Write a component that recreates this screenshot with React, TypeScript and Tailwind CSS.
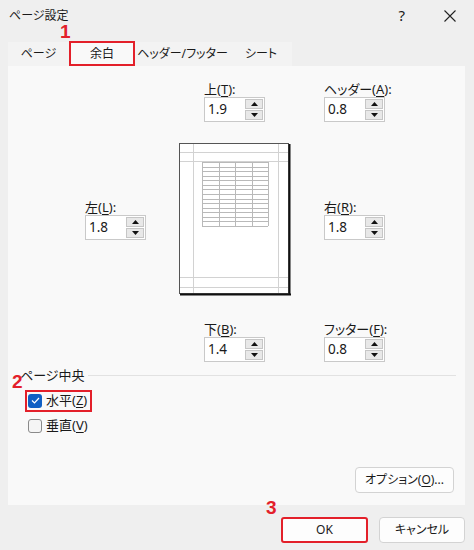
import React from 'react';

const Spin = ({ value }: { value: string }) => (
  <div className="flex h-[25px] w-[61px] border border-[#c9c9c9] bg-white">
    <div className="flex-1 pl-[3px] text-[13.5px] leading-[23px] text-[#1a1a1a]">{value}</div>
    <div className="flex w-[19px] flex-col gap-[1px] py-[1px] pr-[1px]">
      <div className="flex flex-1 items-center justify-center border border-[#c6c6c6] bg-[#e8e8e8]">
        <svg width="7" height="4" viewBox="0 0 7 4">
          <path d="M0 4 L3.5 0 L7 4 Z" fill="#111" />
        </svg>
      </div>
      <div className="flex flex-1 items-center justify-center border border-[#c6c6c6] bg-[#e8e8e8]">
        <svg width="7" height="4" viewBox="0 0 7 4">
          <path d="M0 0 L3.5 4 L7 0 Z" fill="#111" />
        </svg>
      </div>
    </div>
  </div>
);

const Field = ({ label, accel, value }: { label: string; accel: string; value: string }) => (
  <div className="flex flex-col">
    <div className="h-[16px] whitespace-nowrap text-[13px] leading-[16px] text-[#1a1a1a]">
      {label}(<span className="underline underline-offset-2">{accel}</span>):
    </div>
    <Spin value={value} />
  </div>
);

const PagePreview = () => {
  const rows = Array.from({ length: 15 }, (_, i) => 19 + (i * 64) / 14);
  const cols = Array.from({ length: 5 }, (_, j) => 23 + j * 16.5);
  return (
    <svg width="112" height="153" viewBox="0 0 112 153">
      <rect x="0.5" y="0.5" width="109" height="150" fill="#fff" stroke="#555" />
      <line x1="110.5" y1="1" x2="110.5" y2="152" stroke="#111" strokeWidth="2" />
      <line x1="1" y1="151.5" x2="112" y2="151.5" stroke="#111" strokeWidth="2" />
      <g stroke="#d2d2d2" strokeWidth="1">
        <line x1="14.5" y1="1" x2="14.5" y2="150" />
        <line x1="99.5" y1="1" x2="99.5" y2="150" />
        <line x1="1" y1="9.5" x2="109" y2="9.5" />
        <line x1="1" y1="18.5" x2="109" y2="18.5" />
        <line x1="1" y1="134.5" x2="109" y2="134.5" />
        <line x1="1" y1="144.5" x2="109" y2="144.5" />
      </g>
      <g stroke="#b9b9b9" strokeWidth="1">
        {rows.map((y) => (
          <line key={y} x1="23" y1={Math.round(y) + 0.5} x2="89" y2={Math.round(y) + 0.5} />
        ))}
        {cols.map((x) => (
          <line key={x} x1={Math.round(x) + 0.5} y1="19" x2={Math.round(x) + 0.5} y2="83" />
        ))}
      </g>
    </svg>
  );
};

const Mark = ({ n, className }: { n: string; className: string }) => (
  <div
    className={`absolute font-['Liberation_Sans',sans-serif] text-[19px] leading-none font-bold text-[#e3202a] ${className}`}
  >
    {n}
  </div>
);

export default function App() {
  const tabs = [
    { name: 'ページ', w: 'w-[61px]' },
    { name: '余白', w: 'w-[66px]', active: true },
    { name: 'ヘッダー/フッター', w: 'w-[95px]' },
    { name: 'シート', w: 'w-[62px]' },
  ];

  return (
    <div className="relative flex h-[550px] w-[474px] flex-col overflow-hidden bg-[#efefef] font-['Noto_Sans','Noto_Sans_CJK_JP',sans-serif] text-[#1a1a1a] [font-feature-settings:'palt']">
      {/* title bar */}
      <div className="flex h-[31px] items-center pl-[9px] pr-[18px]">
        <span className="text-[12px] leading-none">ページ設定</span>
        <span className="ml-auto mr-[39px] text-[15px] leading-none">?</span>
        <svg width="12" height="12" viewBox="0 0 12 12">
          <path d="M0.5 0.5 L11.5 11.5 M11.5 0.5 L0.5 11.5" stroke="#222" strokeWidth="1.1" />
        </svg>
      </div>

      {/* tabs */}
      <div className="mt-[10px] flex h-[25px] pl-[8px]">
        {tabs.map((t) =>
          t.active ? (
            <div
              key={t.name}
              className={`${t.w} flex items-center justify-center border-2 border-[#e3202a] bg-[#f9f9f9] text-[12px]`}
            >
              {t.name}
            </div>
          ) : (
            <div
              key={t.name}
              className={`${t.w} mt-[1px] flex items-center justify-center bg-[#f3f3f3] text-[12px]`}
            >
              {t.name}
            </div>
          )
        )}
      </div>

      {/* panel */}
      <div className="mx-[8px] flex h-[439px] w-[457px] flex-col bg-[#f9f9f9]">
        <div className="pl-[77px] pt-[15px]">
          <div className="grid grid-cols-[61px_112px_61px] gap-x-[33px]">
            <div />
            <div className="pl-[25px]">
              <Field label="上" accel="T" value="1.9" />
            </div>
            <Field label="ヘッダー" accel="A" value="0.8" />
          </div>

          <div className="mt-[21px] grid grid-cols-[61px_112px_61px] items-center gap-x-[33px]">
            <Field label="左" accel="L" value="1.8" />
            <PagePreview />
            <Field label="右" accel="R" value="1.8" />
          </div>

          <div className="mt-[25px] grid grid-cols-[61px_112px_61px] gap-x-[33px]">
            <div />
            <div className="pl-[25px]">
              <Field label="下" accel="B" value="1.4" />
            </div>
            <Field label="フッター" accel="F" value="0.8" />
          </div>
        </div>

        {/* group */}
        <div className="mt-[5px] flex h-[16px] items-center pl-[12px] pr-[9px]">
          <span className="text-[13px] leading-[16px]">ページ中央</span>
          <div className="ml-[3px] h-[1px] flex-1 bg-[#e2e2e2]" />
        </div>

        <div className="mt-[5px] flex flex-col pl-[17px]">
          <div className="flex h-[25px] items-center">
            <div className="flex h-[22px] items-center gap-[4px] border-2 border-[#e3202a] pl-[1px] pr-[3px]">
              <div className="flex h-[14px] w-[14px] items-center justify-center rounded-[3px] bg-[#0f5fc4]">
                <svg width="9" height="7" viewBox="0 0 9 7">
                  <path d="M1 3.5 L3.5 6 L8 1" stroke="#fff" strokeWidth="1.2" fill="none" />
                </svg>
              </div>
              <span className="text-[13px]">
                水平(<span className="underline underline-offset-2">Z</span>)
              </span>
            </div>
          </div>
          <div className="flex h-[25px] items-center gap-[4px] pl-[3px]">
            <div className="h-[14px] w-[14px] rounded-[3px] border border-[#8a8a8a] bg-[#f5f5f5]" />
            <span className="text-[13px]">
              垂直(<span className="underline underline-offset-2">V</span>)
            </span>
          </div>
        </div>

        <div className="flex flex-1 items-end justify-end pb-[12px] pr-[11px]">
          <button className="h-[26px] w-[99px] rounded-[4px] border border-[#d3d3d3] bg-[#fdfdfd] text-[12px]">
            オプション(<span className="underline underline-offset-2">O</span>)...
          </button>
        </div>
      </div>

      {/* footer buttons */}
      <div className="mt-[12px] flex gap-[11px] pl-[281px]">
        <button className="h-[26px] w-[87px] rounded-[3px] border-2 border-[#e3202a] bg-[#fdfdfd] text-[12px]">
          OK
        </button>
        <button className="h-[26px] w-[86px] rounded-[4px] border border-[#d3d3d3] bg-[#fdfdfd] text-[12px]">
          キャンセル
        </button>
      </div>

      <Mark n="1" className="left-[60px] top-[22px]" />
      <Mark n="2" className="left-[12px] top-[372px]" />
      <Mark n="3" className="left-[266px] top-[498px]" />
    </div>
  );
}
